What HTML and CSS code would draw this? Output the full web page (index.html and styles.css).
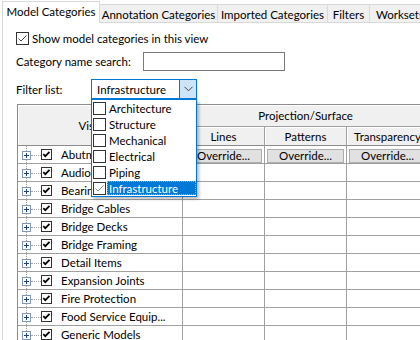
FILE: index.html
```html
<!DOCTYPE html>
<html>
<head>
<meta charset="utf-8">
<link rel="stylesheet" href="styles.css">
</head>
<body>
<div class="dialog">
  <div class="tabs">
    <div class="tab active">Model Categories</div>
    <div class="tab w-ann">Annotation Categories</div>
    <div class="tab w-imp">Imported Categories</div>
    <div class="tab w-fil">Filters</div>
    <div class="tab w-wrk">Worksets</div>
  </div>
  <div class="panel">
    <div class="row show-row">
      <span class="cb13"><svg width="13" height="13" viewBox="0 0 13 13"><rect x="0.5" y="0.5" width="12" height="12" fill="#fff" stroke="#333"/><path d="M2.5 6.5l2.5 2.5 5.5-5.5" fill="none" stroke="#444" stroke-width="1"/></svg></span>
      <span class="show-label">Show model categories in this view</span>
    </div>
    <div class="row search-row">
      <span class="lbl-search">Category name search:</span>
      <span class="input"></span>
    </div>
    <div class="row filter-row">
      <span class="lbl-filter">Filter list:</span>
      <div class="combo">
        <span class="combo-text">Infrastructure</span>
        <span class="combo-btn"><svg width="9" height="6" viewBox="0 0 9 6"><path d="M0.5 0.8l4 4 4-4" fill="none" stroke="#444" stroke-width="1"/></svg></span>
        <div class="droplist">
          <div class="item"><span class="cb13"><svg width="13" height="13" viewBox="0 0 13 13"><rect x="0.5" y="0.5" width="12" height="12" fill="#fff" stroke="#333"/></svg></span><span class="item-label">Architecture</span></div>
          <div class="item"><span class="cb13"><svg width="13" height="13" viewBox="0 0 13 13"><rect x="0.5" y="0.5" width="12" height="12" fill="#fff" stroke="#333"/></svg></span><span class="item-label">Structure</span></div>
          <div class="item"><span class="cb13"><svg width="13" height="13" viewBox="0 0 13 13"><rect x="0.5" y="0.5" width="12" height="12" fill="#fff" stroke="#333"/></svg></span><span class="item-label">Mechanical</span></div>
          <div class="item"><span class="cb13"><svg width="13" height="13" viewBox="0 0 13 13"><rect x="0.5" y="0.5" width="12" height="12" fill="#fff" stroke="#333"/></svg></span><span class="item-label">Electrical</span></div>
          <div class="item"><span class="cb13"><svg width="13" height="13" viewBox="0 0 13 13"><rect x="0.5" y="0.5" width="12" height="12" fill="#fff" stroke="#333"/></svg></span><span class="item-label">Piping</span></div>
          <div class="item"><span class="cb13"><svg width="13" height="13" viewBox="0 0 13 13"><rect x="0.5" y="0.5" width="12" height="12" fill="#fff" stroke="#333"/><path d="M2.5 6.5l2.5 2.5 5.5-5.5" fill="none" stroke="#8a8a8a" stroke-width="1"/></svg></span><span class="item-label selected">Infrastructure</span></div>
        </div>
      </div>
    </div>

    <div class="grid">
      <div class="hcell vis-head">Visibility</div>
      <div class="hcell proj-head">Projection/Surface</div>
      <div class="hcell">Lines</div>
      <div class="hcell">Patterns</div>
      <div class="hcell">Transparency</div>

      <div class="cell tree"><span class="plus"><svg width="9" height="9" viewBox="0 0 9 9"><rect x="0.5" y="0.5" width="8" height="8" fill="#fff" stroke="#8197b8"/><path d="M2 4.5h5M4.5 2v5" stroke="#1f3f86" stroke-width="1"/></svg></span><span class="dots"></span><span class="cb11"><svg width="11" height="11" viewBox="0 0 11 11"><rect x="0.5" y="0.5" width="10" height="10" fill="#fff" stroke="#333"/><path d="M2.3 5.2l2 2 4.2-4.4" fill="none" stroke="#000" stroke-width="1.7"/></svg></span><span class="name">Abutments</span></div>
      <div class="cell"><span class="ovr">Override...</span></div>
      <div class="cell"><span class="ovr">Override...</span></div>
      <div class="cell"><span class="ovr">Override...</span></div>

      <div class="cell tree"><span class="plus"><svg width="9" height="9" viewBox="0 0 9 9"><rect x="0.5" y="0.5" width="8" height="8" fill="#fff" stroke="#8197b8"/><path d="M2 4.5h5M4.5 2v5" stroke="#1f3f86" stroke-width="1"/></svg></span><span class="dots"></span><span class="cb11"><svg width="11" height="11" viewBox="0 0 11 11"><rect x="0.5" y="0.5" width="10" height="10" fill="#fff" stroke="#333"/><path d="M2.3 5.2l2 2 4.2-4.4" fill="none" stroke="#000" stroke-width="1.7"/></svg></span><span class="name">Audio Visual Devices</span></div>
      <div class="cell"></div><div class="cell"></div><div class="cell"></div>

      <div class="cell tree"><span class="plus"><svg width="9" height="9" viewBox="0 0 9 9"><rect x="0.5" y="0.5" width="8" height="8" fill="#fff" stroke="#8197b8"/><path d="M2 4.5h5M4.5 2v5" stroke="#1f3f86" stroke-width="1"/></svg></span><span class="dots"></span><span class="cb11"><svg width="11" height="11" viewBox="0 0 11 11"><rect x="0.5" y="0.5" width="10" height="10" fill="#fff" stroke="#333"/><path d="M2.3 5.2l2 2 4.2-4.4" fill="none" stroke="#000" stroke-width="1.7"/></svg></span><span class="name">Bearings</span></div>
      <div class="cell"></div><div class="cell"></div><div class="cell"></div>

      <div class="cell tree"><span class="plus"><svg width="9" height="9" viewBox="0 0 9 9"><rect x="0.5" y="0.5" width="8" height="8" fill="#fff" stroke="#8197b8"/><path d="M2 4.5h5M4.5 2v5" stroke="#1f3f86" stroke-width="1"/></svg></span><span class="dots"></span><span class="cb11"><svg width="11" height="11" viewBox="0 0 11 11"><rect x="0.5" y="0.5" width="10" height="10" fill="#fff" stroke="#333"/><path d="M2.3 5.2l2 2 4.2-4.4" fill="none" stroke="#000" stroke-width="1.7"/></svg></span><span class="name">Bridge Cables</span></div>
      <div class="cell"></div><div class="cell"></div><div class="cell"></div>

      <div class="cell tree"><span class="plus"><svg width="9" height="9" viewBox="0 0 9 9"><rect x="0.5" y="0.5" width="8" height="8" fill="#fff" stroke="#8197b8"/><path d="M2 4.5h5M4.5 2v5" stroke="#1f3f86" stroke-width="1"/></svg></span><span class="dots"></span><span class="cb11"><svg width="11" height="11" viewBox="0 0 11 11"><rect x="0.5" y="0.5" width="10" height="10" fill="#fff" stroke="#333"/><path d="M2.3 5.2l2 2 4.2-4.4" fill="none" stroke="#000" stroke-width="1.7"/></svg></span><span class="name">Bridge Decks</span></div>
      <div class="cell"></div><div class="cell"></div><div class="cell"></div>

      <div class="cell tree"><span class="plus"><svg width="9" height="9" viewBox="0 0 9 9"><rect x="0.5" y="0.5" width="8" height="8" fill="#fff" stroke="#8197b8"/><path d="M2 4.5h5M4.5 2v5" stroke="#1f3f86" stroke-width="1"/></svg></span><span class="dots"></span><span class="cb11"><svg width="11" height="11" viewBox="0 0 11 11"><rect x="0.5" y="0.5" width="10" height="10" fill="#fff" stroke="#333"/><path d="M2.3 5.2l2 2 4.2-4.4" fill="none" stroke="#000" stroke-width="1.7"/></svg></span><span class="name">Bridge Framing</span></div>
      <div class="cell"></div><div class="cell"></div><div class="cell"></div>

      <div class="cell tree"><span class="plus"><svg width="9" height="9" viewBox="0 0 9 9"><rect x="0.5" y="0.5" width="8" height="8" fill="#fff" stroke="#8197b8"/><path d="M2 4.5h5M4.5 2v5" stroke="#1f3f86" stroke-width="1"/></svg></span><span class="dots"></span><span class="cb11"><svg width="11" height="11" viewBox="0 0 11 11"><rect x="0.5" y="0.5" width="10" height="10" fill="#fff" stroke="#333"/><path d="M2.3 5.2l2 2 4.2-4.4" fill="none" stroke="#000" stroke-width="1.7"/></svg></span><span class="name">Detail Items</span></div>
      <div class="cell"></div><div class="cell"></div><div class="cell"></div>

      <div class="cell tree"><span class="plus"><svg width="9" height="9" viewBox="0 0 9 9"><rect x="0.5" y="0.5" width="8" height="8" fill="#fff" stroke="#8197b8"/><path d="M2 4.5h5M4.5 2v5" stroke="#1f3f86" stroke-width="1"/></svg></span><span class="dots"></span><span class="cb11"><svg width="11" height="11" viewBox="0 0 11 11"><rect x="0.5" y="0.5" width="10" height="10" fill="#fff" stroke="#333"/><path d="M2.3 5.2l2 2 4.2-4.4" fill="none" stroke="#000" stroke-width="1.7"/></svg></span><span class="name">Expansion Joints</span></div>
      <div class="cell"></div><div class="cell"></div><div class="cell"></div>

      <div class="cell tree"><span class="plus"><svg width="9" height="9" viewBox="0 0 9 9"><rect x="0.5" y="0.5" width="8" height="8" fill="#fff" stroke="#8197b8"/><path d="M2 4.5h5M4.5 2v5" stroke="#1f3f86" stroke-width="1"/></svg></span><span class="dots"></span><span class="cb11"><svg width="11" height="11" viewBox="0 0 11 11"><rect x="0.5" y="0.5" width="10" height="10" fill="#fff" stroke="#333"/><path d="M2.3 5.2l2 2 4.2-4.4" fill="none" stroke="#000" stroke-width="1.7"/></svg></span><span class="name">Fire Protection</span></div>
      <div class="cell"></div><div class="cell"></div><div class="cell"></div>

      <div class="cell tree"><span class="plus"><svg width="9" height="9" viewBox="0 0 9 9"><rect x="0.5" y="0.5" width="8" height="8" fill="#fff" stroke="#8197b8"/><path d="M2 4.5h5M4.5 2v5" stroke="#1f3f86" stroke-width="1"/></svg></span><span class="dots"></span><span class="cb11"><svg width="11" height="11" viewBox="0 0 11 11"><rect x="0.5" y="0.5" width="10" height="10" fill="#fff" stroke="#333"/><path d="M2.3 5.2l2 2 4.2-4.4" fill="none" stroke="#000" stroke-width="1.7"/></svg></span><span class="name">Food Service Equip...</span></div>
      <div class="cell"></div><div class="cell"></div><div class="cell"></div>

      <div class="cell tree"><span class="plus"><svg width="9" height="9" viewBox="0 0 9 9"><rect x="0.5" y="0.5" width="8" height="8" fill="#fff" stroke="#8197b8"/><path d="M2 4.5h5M4.5 2v5" stroke="#1f3f86" stroke-width="1"/></svg></span><span class="dots"></span><span class="cb11"><svg width="11" height="11" viewBox="0 0 11 11"><rect x="0.5" y="0.5" width="10" height="10" fill="#fff" stroke="#333"/><path d="M2.3 5.2l2 2 4.2-4.4" fill="none" stroke="#000" stroke-width="1.7"/></svg></span><span class="name">Generic Models</span></div>
      <div class="cell"></div><div class="cell"></div><div class="cell"></div>
    </div>
  </div>
</div>
</body>
</html>
```

FILE: styles.css
```css
* { box-sizing: border-box; }
html, body { margin: 0; padding: 0; }
body {
  width: 420px;
  height: 340px;
  overflow: hidden;
  background: #fff;
  font-family: Lato, "Noto Sans", sans-serif;
  font-size: 11.5px;
  color: #000;
}
svg { display: block; }

.dialog { width: 560px; }

/* tabs */
.tabs {
  display: flex;
  align-items: flex-end;
  height: 22px;
  padding-left: 2px;
  position: relative;
  z-index: 2;
}
.tab {
  height: 18px;
  background: #f0f0f0;
  border-top: 1px solid #d9d9d9;
  border-right: 1px solid #d9d9d9;
  display: flex;
  align-items: center;
  justify-content: center;
  white-space: nowrap;
  padding-top: 1px;
}
.tab.active {
  width: 98px;
  height: 22px;
  margin-bottom: -1px;
  background: #fff;
  border-left: 1px solid #d9d9d9;
  padding-top: 0;
  padding-bottom: 2px;
}
.w-ann { width: 118px; }
.w-imp { width: 110px; }
.w-fil { width: 42px; }
.w-wrk { width: 70px; justify-content: flex-start; padding-left: 6px; }

/* panel */
.panel {
  margin-left: 2px;
  border-top: 1px solid #d9d9d9;
  border-left: 1px solid #d9d9d9;
  padding-left: 13px;
  height: 330px;
}
.row { display: flex; align-items: center; }
.show-row { margin-top: 7px; height: 16px; }
.cb13 { width: 13px; height: 13px; flex: none; }
.show-label { margin-left: 3px; }

.search-row { margin-top: 6px; height: 19px; }
.lbl-search { width: 127px; flex: none; }
.input {
  width: 142px;
  height: 19px;
  border: 1px solid #7a7a7a;
  background: #fff;
}

.filter-row { margin-top: 8px; height: 20px; }
.lbl-filter { width: 75px; flex: none; }
.combo {
  position: relative;
  width: 106px;
  height: 20px;
  border: 1px solid #0078d7;
  display: flex;
  background: #fff;
}
.combo-text {
  flex: 1;
  display: flex;
  align-items: center;
  padding-left: 5px;
}
.combo-btn {
  width: 17px;
  background: #cce4f7;
  border-left: 1px solid #0078d7;
  display: flex;
  align-items: center;
  justify-content: center;
}
.droplist {
  position: absolute;
  left: -1px;
  top: 19px;
  width: 106px;
  border: 1px solid #0078d7;
  background: #fff;
  box-shadow: 2px 2px 3px rgba(0, 0, 0, 0.28);
  z-index: 5;
}
.item {
  height: 16px;
  display: flex;
  align-items: center;
  padding-left: 1px;
}
.item-label {
  margin-left: 1px;
  height: 14px;
  padding: 0 1px;
  border: 1px dotted transparent;
  display: flex;
  align-items: center;
  white-space: nowrap;
}
.item-label.selected {
  flex: 1;
  background: #0078d7;
  color: #fff;
  border-color: #ff9e1f;
}

/* grid */
.grid {
  margin-top: 5px;
  margin-left: 1px;
  display: grid;
  grid-template-columns: 165px 82px 82px 82px;
  grid-template-rows: 22px 19px repeat(11, 18px);
  border-top: 1px solid #8c8c8c;
  border-left: 1px solid #8c8c8c;
  width: max-content;
}
.hcell {
  background: #f0f0f0;
  border-right: 1px solid #a0a0a0;
  border-bottom: 1px solid #a0a0a0;
  box-shadow: inset 1px 1px 0 #fff;
  display: flex;
  align-items: center;
  justify-content: center;
  white-space: nowrap;
}
.vis-head {
  grid-row: 1 / 3;
  grid-column: 1;
  border-bottom-color: #8c8c8c;
}
.proj-head { grid-column: 2 / 5; }
.grid > .hcell:nth-child(n+3) { border-bottom-color: #8c8c8c; }

.cell {
  border-right: 1px solid #a0a0a0;
  border-bottom: 1px solid #a0a0a0;
  display: flex;
  align-items: center;
  min-width: 0;
  padding: 1px 2px 0;
}
.tree {
  padding: 0 0 0 4px;
  background-image: repeating-linear-gradient(to bottom, #a0a0a0 0 1px, transparent 1px 2px);
  background-size: 1px 100%;
  background-repeat: no-repeat;
  background-position: 8px 0;
  white-space: nowrap;
  overflow: hidden;
}
.plus { width: 9px; height: 9px; flex: none; margin-top: 2px; }
.dots {
  width: 10px;
  height: 1px;
  margin-top: 2px;
  border-top: 1px dotted #a0a0a0;
  flex: none;
}
.cb11 { width: 11px; height: 11px; flex: none; }
.name { margin-left: 9px; }

.ovr {
  flex: 1;
  height: 14px;
  margin-top: 1px;
  border: 1px solid #adadad;
  background: #e1e1e1;
  display: flex;
  align-items: center;
  justify-content: center;
  white-space: nowrap;
}
```
